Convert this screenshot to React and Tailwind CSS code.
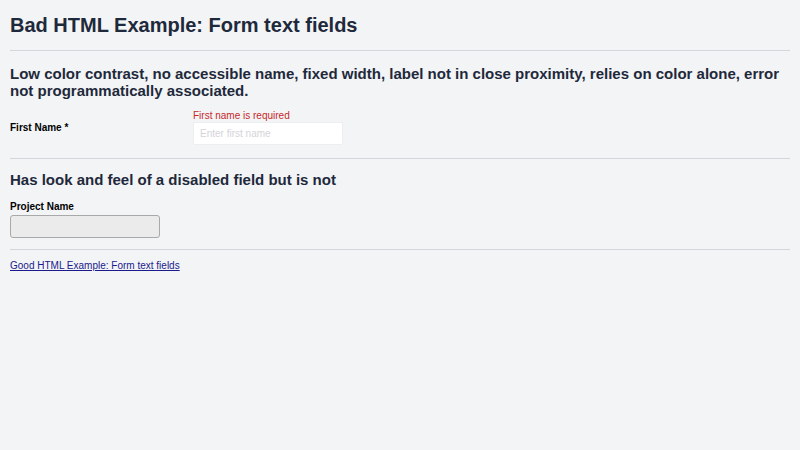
export default function App() {
  return (
    <div className="min-h-screen bg-[#f3f4f6] p-[10px] font-['Liberation_Sans',Arial,sans-serif] text-[#1e293b]">
      <h1 className="mt-[4px] text-[20px] font-bold leading-[23px]">Bad HTML Example: Form text fields</h1>
      <hr className="mt-[13px] border-0 border-t border-[#d4d6db]" />

      <h2 className="mt-[14px] text-[15px] font-bold leading-[17px]">
        Low color contrast, no accessible name, fixed width, label not in close proximity, relies on color alone, error not programmatically associated.
      </h2>

      <div className="mt-[11px] flex items-center">
        <span className="w-[183px] text-[10px] font-bold text-black leading-[12px]">First Name *</span>
        <div className="flex flex-col">
          <span className="text-[10px] leading-[12px] text-[#c62828]">First name is required</span>
          <input
            type="text"
            placeholder="Enter first name"
            className="w-[150px] h-[23px] bg-white border border-[#eceef1] rounded-[2px] px-[6px] text-[10px] placeholder:text-[#d4d4d8] outline-none"
          />
        </div>
      </div>
      <hr className="mt-[13px] border-0 border-t border-[#d4d6db]" />

      <h2 className="mt-[12px] text-[15px] font-bold leading-[17px]">Has look and feel of a disabled field but is not</h2>
      <label className="mt-[13px] block text-[10px] font-bold text-black leading-[12px]">Project Name</label>
      <input
        type="text"
        className="mt-[2px] block w-[150px] h-[23px] bg-[#ebebeb] border border-[#a9a9a9] rounded-[3px] text-[10px] outline-none"
      />
      <hr className="mt-[11px] border-0 border-t border-[#d4d6db]" />

      <a href="#" className="mt-[10px] inline-block text-[10px] leading-[12px] text-[#1a1a8c] underline">Good HTML Example: Form text fields</a>
    </div>
  );
}
